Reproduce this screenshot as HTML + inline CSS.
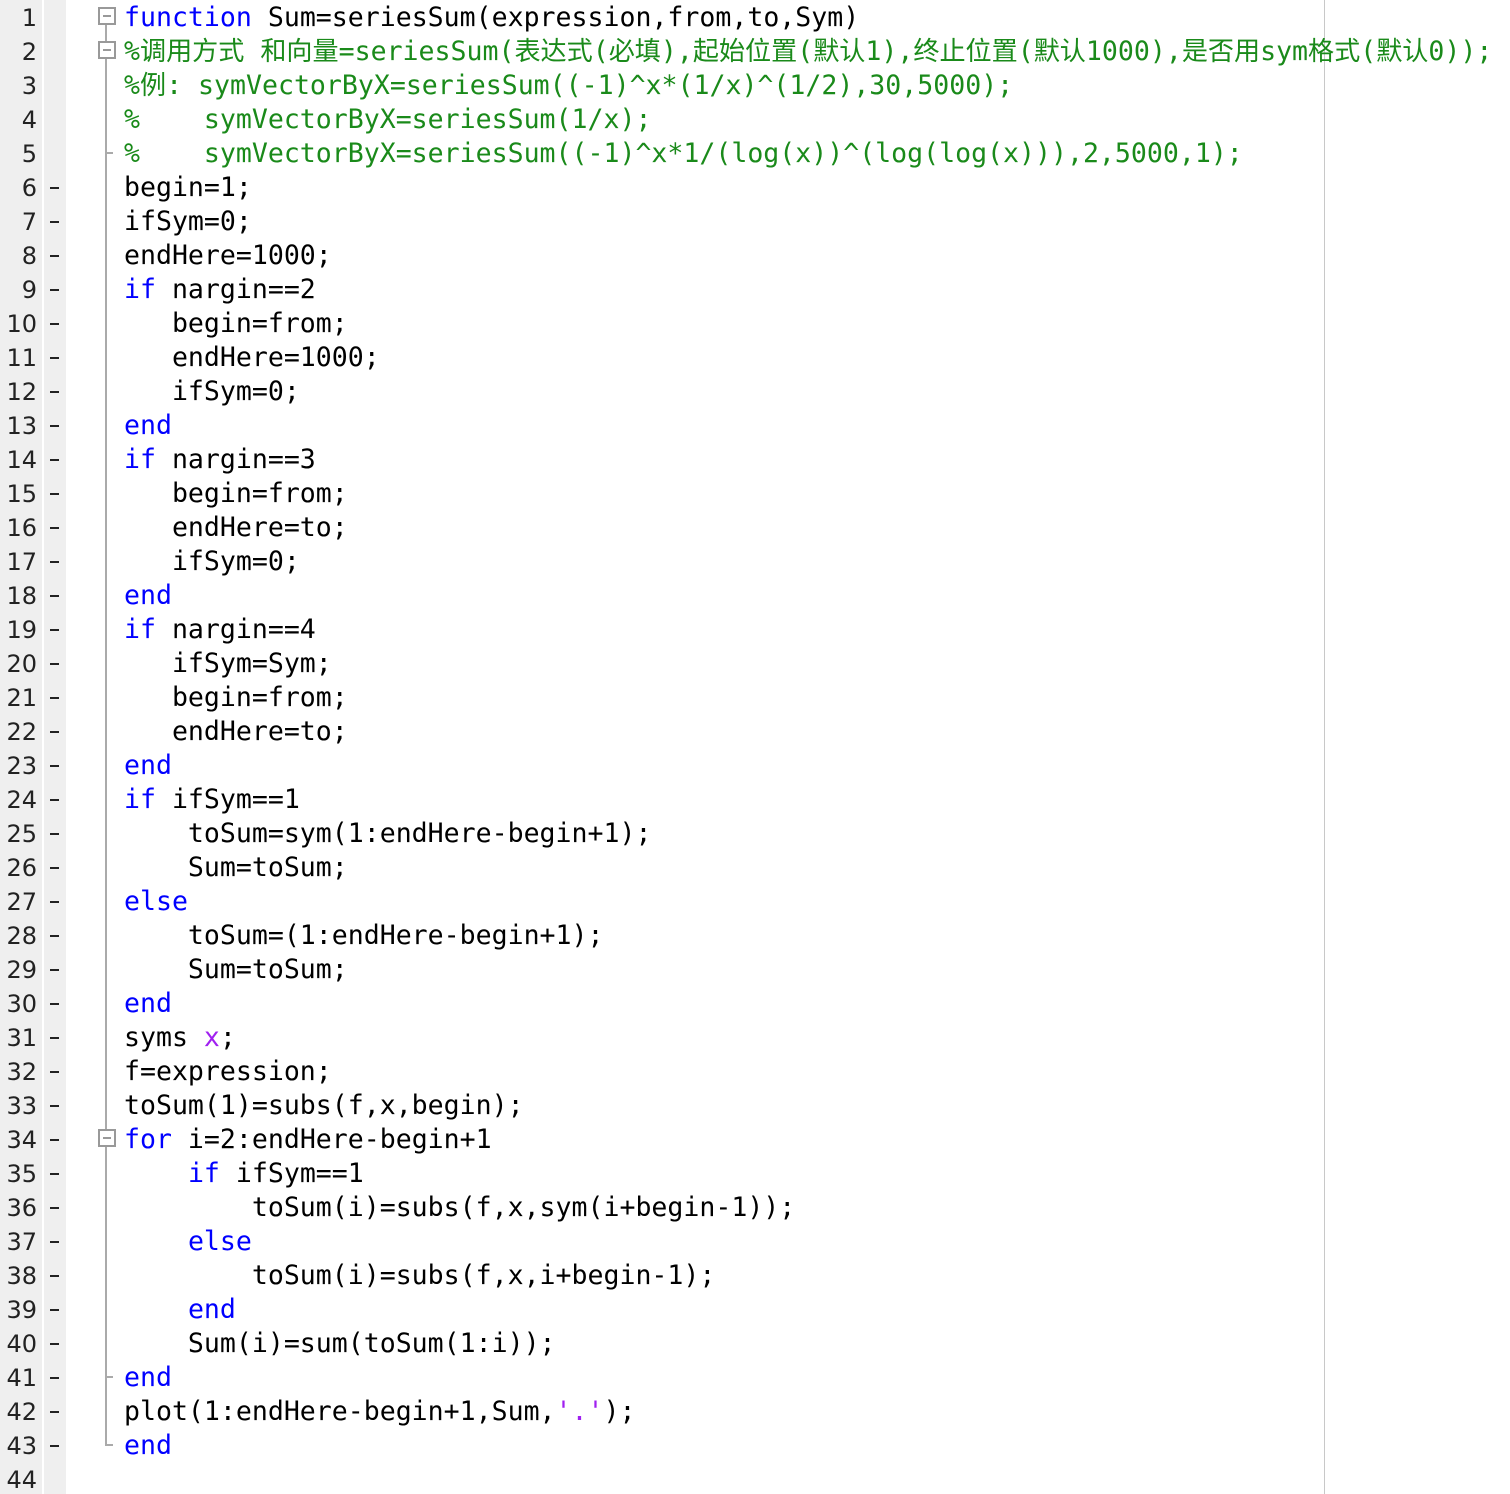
<!DOCTYPE html>
<html><head><meta charset="utf-8"><style>
html,body{margin:0;padding:0;background:#fff;width:1510px;height:1494px;overflow:hidden;position:relative}
.g1{position:absolute;left:0;top:0;width:42px;height:1494px;background:#efefef}
.g2{position:absolute;left:44px;top:0;width:22px;height:1494px;background:#efefef}
.rm{position:absolute;left:1324px;top:0;width:1px;height:1494px;background:#c8c8c8}
.l{position:absolute;left:124px;height:34px;line-height:34px;font-family:"DejaVu Sans Mono","Noto Sans CJK SC",monospace;font-size:26.55px;white-space:pre;color:#000}
.n{position:absolute;left:0;width:37px;text-align:right;height:34px;line-height:34px;font-family:"DejaVu Sans","Liberation Sans",sans-serif;font-size:24px;color:#222}
.d{position:absolute;left:50px;width:9px;height:2px;background:#222}
.k{color:#0000ff}.c{color:#1a8a1a}.p{color:#a020f0}
.z{font-size:26.1px}
.vl{position:absolute;left:105px;width:2px;background:#aaa}
.box{position:absolute;left:98px;width:14px;height:14px;border:2px solid #999;background:#fff;box-sizing:content-box}
.box:after{content:"";position:absolute;left:3px;top:6px;width:8px;height:2px;background:#999}
.tk{position:absolute;left:105px;width:8px;height:2px;background:#aaa}
</style></head><body>
<div class="g1"></div><div class="g2"></div><div class="rm"></div>
<div class="vl" style="top:18px;height:1428px"></div>
<div class="box" style="top:7px"></div>
<div class="box" style="top:41px"></div>
<div class="box" style="top:1129px"></div>
<div class="tk" style="top:152px"></div>
<div class="tk" style="top:1376px"></div>
<div class="tk" style="top:1444px"></div>
<div id="c"></div>
<script>
var L=[
'<span class="k">function</span> Sum=seriesSum(expression,from,to,Sym)',
'<span class="c">%<span class="z">调用方式</span> <span class="z">和向量</span>=seriesSum(<span class="z">表达式</span>(<span class="z">必填</span>),<span class="z">起始位置</span>(<span class="z">默认</span>1),<span class="z">终止位置</span>(<span class="z">默认</span>1000),<span class="z">是否用</span>sym<span class="z">格式</span>(<span class="z">默认</span>0));</span>',
'<span class="c">%<span class="z">例</span>: symVectorByX=seriesSum((-1)^x*(1/x)^(1/2),30,5000);</span>',
'<span class="c">%    symVectorByX=seriesSum(1/x);</span>',
'<span class="c">%    symVectorByX=seriesSum((-1)^x*1/(log(x))^(log(log(x))),2,5000,1);</span>',
'begin=1;','ifSym=0;','endHere=1000;',
'<span class="k">if</span> nargin==2','   begin=from;','   endHere=1000;','   ifSym=0;',
'<span class="k">end</span>',
'<span class="k">if</span> nargin==3','   begin=from;','   endHere=to;','   ifSym=0;',
'<span class="k">end</span>',
'<span class="k">if</span> nargin==4','   ifSym=Sym;','   begin=from;','   endHere=to;',
'<span class="k">end</span>',
'<span class="k">if</span> ifSym==1','    toSum=sym(1:endHere-begin+1);','    Sum=toSum;',
'<span class="k">else</span>','    toSum=(1:endHere-begin+1);','    Sum=toSum;',
'<span class="k">end</span>',
'syms <span class="p">x</span>;','f=expression;','toSum(1)=subs(f,x,begin);',
'<span class="k">for</span> i=2:endHere-begin+1',
'    <span class="k">if</span> ifSym==1','        toSum(i)=subs(f,x,sym(i+begin-1));',
'    <span class="k">else</span>','        toSum(i)=subs(f,x,i+begin-1);',
'    <span class="k">end</span>','    Sum(i)=sum(toSum(1:i));',
'<span class="k">end</span>',
'plot(1:endHere-begin+1,Sum,<span class="p">\'.\'</span>);',
'<span class="k">end</span>',''];
var h='';
for(var i=0;i<44;i++){var t=i*34+1;
h+='<div class="n" style="top:'+t+'px">'+(i+1)+'</div>';
if(i>=5&&i<43)h+='<div class="d" style="top:'+(t+16)+'px"></div>';
h+='<div class="l" style="top:'+t+'px">'+L[i]+'</div>';}
document.getElementById('c').innerHTML=h;
</script>
</body></html>
